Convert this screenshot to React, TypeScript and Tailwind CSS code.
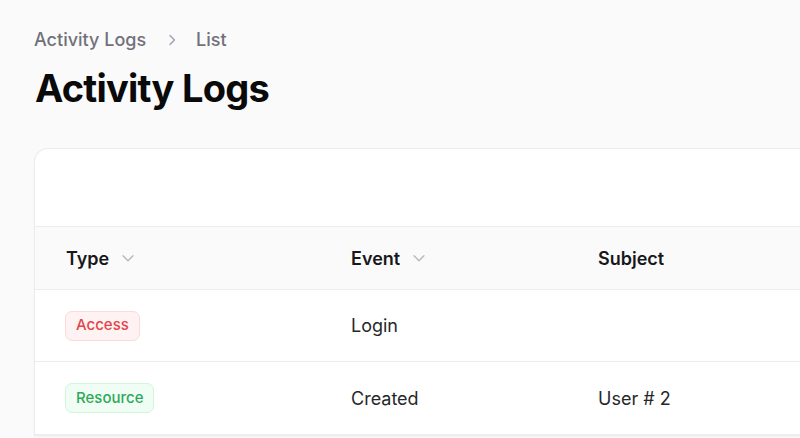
import React from "react";

function ChevronDown() {
  return (
    <svg width="18" height="18" viewBox="0 0 20 20" fill="none" stroke="#b4b4bb" strokeWidth="1.4" strokeLinecap="round" strokeLinejoin="round">
      <path d="M4.5 7.5 10 13l5.5-5.5" />
    </svg>
  );
}

function ChevronRight() {
  return (
    <svg width="16" height="16" viewBox="0 0 20 20" fill="none" stroke="#9ca3af" strokeWidth="1.8" strokeLinecap="round" strokeLinejoin="round">
      <path d="M7.5 4.5 13 10l-5.5 5.5" />
    </svg>
  );
}

export default function App() {
  return (
    <div
      className="w-[800px] h-[438px] overflow-hidden bg-[#fafafa] pl-[34px] pt-[29px]"
      style={{ fontFamily: "Inter, 'Noto Sans', sans-serif" }}
    >
      <div className="flex items-center text-[18px] leading-[22px] font-medium text-[#71717a]">
        <span>Activity Logs</span>
        <span className="ml-[18px] mr-[16px] flex items-center">
          <ChevronRight />
        </span>
        <span>List</span>
      </div>
      <h1 className="mt-[15px] pl-[1px] text-[38px] leading-[44px] font-bold tracking-[-0.02em] text-[#0a0a0a]">
        Activity Logs
      </h1>
      <div className="mt-[38px] w-[800px] rounded-tl-[14px] border border-r-0 border-[#ececec] bg-white shadow-[0_1px_2px_rgba(0,0,0,0.03)]">
        <div className="h-[78px] border-b border-[#ececec]" />
        <div className="flex h-[63px] items-center border-b border-[#ececec] bg-[#fafafa] text-[18px] font-semibold text-[#18181b]">
          <div className="w-[316px] pl-[31px] flex items-center gap-[10px]">
            <span>Type</span>
            <ChevronDown />
          </div>
          <div className="w-[247px] flex items-center gap-[10px]">
            <span>Event</span>
            <ChevronDown />
          </div>
          <div>Subject</div>
        </div>
        <div className="flex h-[72px] items-center border-b border-[#ececec] text-[18px] text-[#27272a]">
          <div className="w-[316px] pl-[30px]">
            <span className="inline-flex h-[30px] items-center rounded-[7px] border border-[#fcdada] bg-[#fef2f2] px-[10px] text-[15px] font-medium text-[#e0454a]">
              Access
            </span>
          </div>
          <div className="w-[247px]">Login</div>
          <div></div>
        </div>
        <div className="flex h-[73px] items-center border-b border-[#ececec] text-[18px] text-[#27272a]">
          <div className="w-[316px] pl-[30px]">
            <span className="inline-flex h-[30px] items-center rounded-[7px] border border-[#d3f5dc] bg-[#f0fdf4] px-[10px] text-[15px] font-medium text-[#30a85a]">
              Resource
            </span>
          </div>
          <div className="w-[247px]">Created</div>
          <div>User # 2</div>
        </div>
      </div>
    </div>
  );
}
